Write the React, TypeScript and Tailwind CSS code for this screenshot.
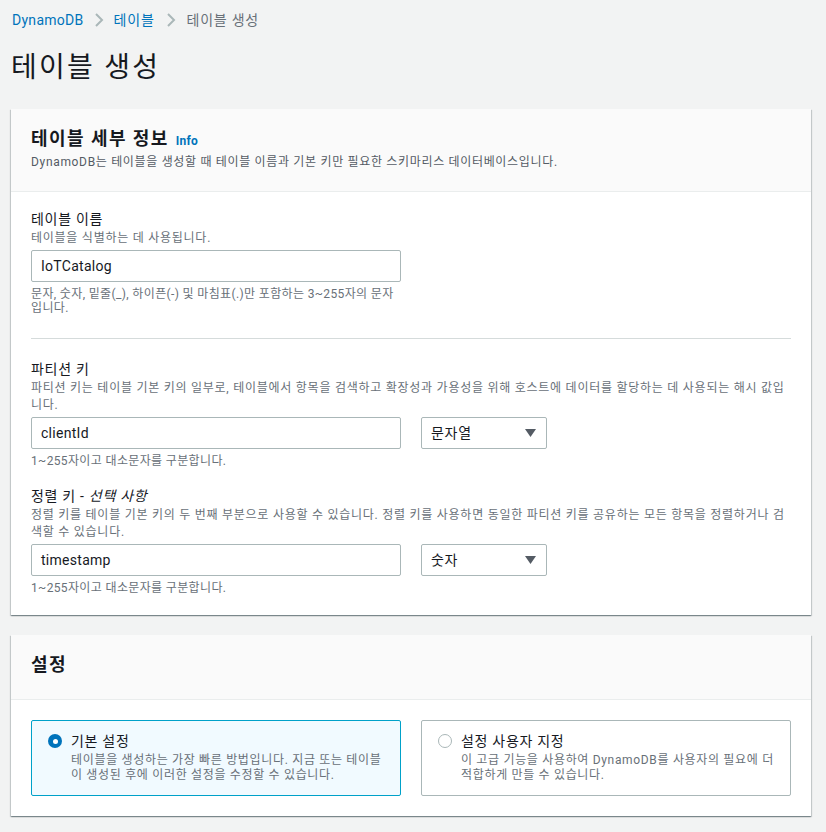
const font = "font-['Roboto','Noto_Sans_CJK_KR',sans-serif] tracking-[0.042em]";

function Field({
  label,
  desc,
  value,
  hint,
  select,
}: {
  label: React.ReactNode;
  desc: string;
  value: string;
  hint: string;
  select?: string;
}) {
  return (
    <div>
      <p className="text-[14px] leading-[20px] tracking-[0.05em] text-[#16191f]">{label}</p>
      <p className="mt-[1px] break-all text-[12px] leading-[17px] tracking-[0.062em] text-[#687078]">{desc}</p>
      <div className="mt-[3px] flex gap-[20px]">
        <div className="flex h-[32px] w-[370px] items-center rounded-[2px] border border-[#aab7b8] bg-white px-[9px] text-[14px] tracking-[0.02em] text-[#16191f]">
          {value}
        </div>
        {select && (
          <div className="flex h-[32px] w-[126px] items-center justify-between rounded-[2px] border border-[#aab7b8] bg-white pl-[9px] pr-[10px] text-[14px] tracking-[0.05em] text-[#16191f]">
            <span>{select}</span>
            <svg width="11" height="8" viewBox="0 0 11 8">
              <path d="M0 0h11L5.5 8z" fill="#545b64" />
            </svg>
          </div>
        )}
      </div>
      <p className="mt-[5px] w-[370px] break-all text-[12px] leading-[14px] tracking-[0.03em] text-[#687078]">{hint}</p>
    </div>
  );
}

function RadioCard({ checked, title, desc }: { checked?: boolean; title: string; desc: string }) {
  return (
    <div
      className={
        checked
          ? "flex h-[76px] w-[370px] gap-[9px] rounded-[2px] border border-[#00a1c9] bg-[#f1faff] pl-[16px] pr-[12px] pt-[10px]"
          : "flex h-[76px] w-[370px] gap-[9px] rounded-[2px] border border-[#aab7b8] bg-white pl-[16px] pr-[12px] pt-[10px]"
      }
    >
      {checked ? (
        <span className="mt-[3px] flex h-[14px] w-[14px] shrink-0 items-center justify-center rounded-full bg-[#0073bb]">
          <span className="h-[5px] w-[5px] rounded-full bg-white" />
        </span>
      ) : (
        <span className="mt-[3px] h-[14px] w-[14px] shrink-0 rounded-full border border-[#aab7b8] bg-white" />
      )}
      <div>
        <p className="text-[14px] leading-[20px] tracking-[0.05em] text-[#16191f]">{title}</p>
        <p className="mt-[2px] break-all text-[12px] leading-[15px] text-[#687078]">{desc}</p>
      </div>
    </div>
  );
}

const shadow =
  "shadow-[0_1px_1px_0_rgba(0,28,36,0.3),1px_1px_1px_0_rgba(0,28,36,0.15),-1px_1px_1px_0_rgba(0,28,36,0.15)]";

export default function App() {
  return (
    <div className={`${font} min-h-[832px] bg-[#f2f3f3] pb-[20px]`}>
      <nav className="flex items-center pl-[12px] pt-[9px] text-[14px] leading-[22px] tracking-[0.02em]">
        <span className="text-[#0073bb]">DynamoDB</span>
        <svg className="mx-[10px]" width="10" height="14" viewBox="0 0 10 14">
          <path d="M2 1l6 6-6 6" fill="none" stroke="#aab7b8" strokeWidth="2" />
        </svg>
        <span className="tracking-[0.055em] text-[#0073bb]">테이블</span>
        <svg className="mx-[11px]" width="10" height="14" viewBox="0 0 10 14">
          <path d="M2 1l6 6-6 6" fill="none" stroke="#aab7b8" strokeWidth="2" />
        </svg>
        <span className="tracking-[0.055em] text-[#687078]">테이블 생성</span>
      </nav>

      <h1 className="mt-[17px] pl-[11px] text-[28px] leading-[40px] tracking-[0.08em] text-[#16191f]">테이블 생성</h1>

      <section className={`ml-[11px] mt-[21px] w-[800px] bg-white ${shadow}`}>
        <header className="border-b border-[#eaeded] bg-[#fafafa] px-[20px] pb-[20px] pt-[17px]">
          <div className="flex items-baseline gap-[7px]">
            <h2 className="text-[18px] font-bold leading-[26px] tracking-[0.08em] text-[#16191f]">테이블 세부 정보</h2>
            <span className="text-[12px] font-bold tracking-[0.02em] text-[#0073bb]">Info</span>
          </div>
          <p className="mt-[2px] text-[12px] leading-[17px] text-[#545b64]">
            DynamoDB는 테이블을 생성할 때 테이블 이름과 기본 키만 필요한 스키마리스 데이터베이스입니다.
          </p>
        </header>
        <div className="px-[20px] pb-[20px] pt-[17px]">
          <Field
            label="테이블 이름"
            desc="테이블을 식별하는 데 사용됩니다."
            value="IoTCatalog"
            hint="문자, 숫자, 밑줄(_), 하이픈(-) 및 마침표(.)만 포함하는 3~255자의 문자입니다."
          />
          <div className="mb-[20px] mt-[23px] border-t border-[#d5dbdb]" />
          <Field
            label="파티션 키"
            desc="파티션 키는 테이블 기본 키의 일부로, 테이블에서 항목을 검색하고 확장성과 가용성을 위해 호스트에 데이터를 할당하는 데 사용되는 해시 값입니다."
            value="clientId"
            select="문자열"
            hint="1~255자이고 대소문자를 구분합니다."
          />
          <div className="mt-[18px]">
            <Field
              label={
                <>
                  정렬 키 - <i>선택 사항</i>
                </>
              }
              desc="정렬 키를 테이블 기본 키의 두 번째 부분으로 사용할 수 있습니다. 정렬 키를 사용하면 동일한 파티션 키를 공유하는 모든 항목을 정렬하거나 검색할 수 있습니다."
              value="timestamp"
              select="숫자"
              hint="1~255자이고 대소문자를 구분합니다."
            />
          </div>
        </div>
      </section>

      <section className={`ml-[11px] mt-[20px] w-[800px] bg-white ${shadow}`}>
        <header className="h-[65px] border-b border-[#eaeded] bg-[#fafafa] px-[20px] pt-[17px]">
          <h2 className="text-[18px] font-bold leading-[26px] tracking-[0.08em] text-[#16191f]">설정</h2>
        </header>
        <div className="flex gap-[20px] px-[20px] pb-[20px] pt-[20px]">
          <RadioCard
            checked
            title="기본 설정"
            desc="테이블을 생성하는 가장 빠른 방법입니다. 지금 또는 테이블이 생성된 후에 이러한 설정을 수정할 수 있습니다."
          />
          <RadioCard
            title="설정 사용자 지정"
            desc="이 고급 기능을 사용하여 DynamoDB를 사용자의 필요에 더 적합하게 만들 수 있습니다."
          />
        </div>
      </section>
    </div>
  );
}
